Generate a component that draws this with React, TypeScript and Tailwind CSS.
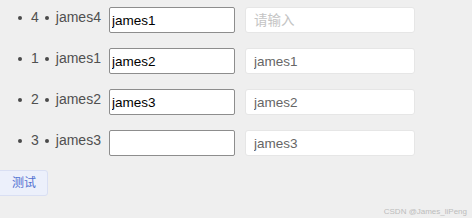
import React from 'react';

const rows = [
  { id: 4, name: 'james4', value: 'james1', mirror: '' },
  { id: 1, name: 'james1', value: 'james2', mirror: 'james1' },
  { id: 2, name: 'james2', value: 'james3', mirror: 'james2' },
  { id: 3, name: 'james3', value: '', mirror: 'james3' },
];

export default function App() {
  return (
    <div className="w-[474px] h-[221px] bg-white">
      <div
        className="relative w-[472px] h-[218px] bg-[#efefef] overflow-hidden"
        style={{ fontFamily: '"Liberation Sans", "Noto Sans CJK SC", sans-serif' }}
      >
        <div className="flex flex-col gap-[15px] pt-[7px]">
          {rows.map((row) => (
            <div key={row.id} className="flex items-start">
              <div className="w-[109px] h-[21px] flex items-center pl-[18px] text-[14px] text-[#505050]">
                <span className="w-[4px] h-[4px] rounded-full bg-[#4a4a4a]" />
                <span className="ml-[9px]">{row.id}</span>
                <span className="ml-[6px] w-[4px] h-[4px] rounded-full bg-[#4a4a4a]" />
                <span className="ml-[7px]">{row.name}</span>
              </div>
              <input
                readOnly
                value={row.value}
                className="w-[126px] h-[26px] px-[2px] border border-[#8d8d8d] rounded-[2px] bg-white text-[13.5px] text-black outline-none"
              />
              <input
                readOnly
                value={row.mirror}
                placeholder="请输入"
                className="ml-[10px] w-[170px] h-[26px] px-[8px] border border-[#e6e6e6] rounded-[3px] bg-white text-[13.5px] text-[#666666] placeholder:text-[#c4c4c4] outline-none"
              />
            </div>
          ))}
        </div>
        <button className="mt-[14px] ml-[-4px] w-[52px] h-[26px] border border-[#d9dff3] rounded-[3px] bg-[#ecf0fb] text-[12px] text-[#4f6fd0] flex items-center justify-center pl-[4px]">
          测试
        </button>
        <div className="absolute right-[5px] bottom-[0px] text-[8px] text-[#bcbcbc]">CSDN @James_liPeng</div>
      </div>
    </div>
  );
}
